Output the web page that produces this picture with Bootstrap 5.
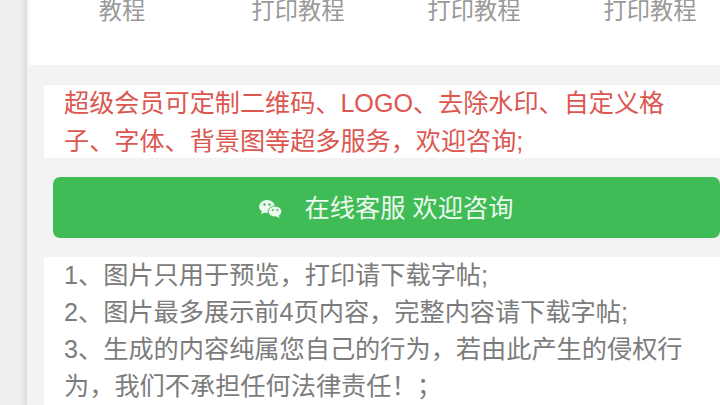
<!DOCTYPE html>
<html lang="zh">
<head>
<meta charset="utf-8">
<title>打印教程</title>
<link href="https://cdn.jsdelivr.net/npm/bootstrap@5.3.0/dist/css/bootstrap.min.css" rel="stylesheet">
<style>
html,body{height:405px;overflow:hidden}
body{background:#f3f3f4;font-family:"Liberation Sans","Noto Sans CJK SC",sans-serif}
.side-rail{width:27px;flex:none;background:linear-gradient(90deg,#efeef1 0,#efeef1 20px,#dedde1 26px,#e4e3e6 27px)}
.page-main{flex:none;width:693px;overflow:hidden}
.guide-strip{height:65px;width:693px;background:linear-gradient(90deg,#f3f3f4 0,#fff 4px);padding-left:7px}
.guide-item{flex:none;width:176px;text-align:center;font-size:23.3px;line-height:22px;color:#999}
.notice-box{margin:20px 0 0 17px;padding:0 20px;height:73px;background:#fff;color:#dc5750;font-size:25.13px;line-height:37.5px}
.chat-btn{margin:19px 0 0 26px;padding:3px 0 0;height:61px;width:667px;border:0;border-radius:7px;background:#40bc56;color:#edf8ef;font-size:25.25px}
.chat-btn:hover{background:#40bc56;color:#edf8ef}
.chat-ico{width:23px;height:18px;margin-right:22px}
.rules-box{margin:19px 0 0 17px;padding:0 20px;height:160px;background:#fff;color:#7c7c7c;font-size:25.2px;line-height:37px}
.rules-box p{margin:0}
</style>
</head>
<body class="d-flex">
<div class="side-rail"></div>
<main class="page-main">
  <div class="guide-strip d-flex">
    <div class="guide-item">教程</div>
    <div class="guide-item">打印教程</div>
    <div class="guide-item">打印教程</div>
    <div class="guide-item">打印教程</div>
  </div>
  <div class="notice-box">超级会员可定制二维码、LOGO、去除水印、自定义格子、字体、背景图等超多服务，欢迎咨询;</div>
  <button type="button" class="btn chat-btn d-flex align-items-center justify-content-center">
    <svg class="chat-ico" viewBox="0 0 23 18" aria-hidden="true">
      <ellipse cx="8" cy="6.500" rx="8" ry="6.500" fill="#edf8ef"/>
      <path d="M3 10.500l-.8 3.700 4.300-2.200z" fill="#edf8ef"/>
      <ellipse cx="16" cy="11.500" rx="6.800" ry="5.500" fill="#edf8ef" stroke="#40bc56" stroke-width="1"/>
      <path d="M19.500 15l1.300 3-3.800-1.500z" fill="#edf8ef"/>
      <circle cx="5.500" cy="4.500" r="1.200" fill="#40bc56"/>
      <circle cx="10.500" cy="4.500" r="1.200" fill="#40bc56"/>
      <circle cx="13.700" cy="10" r="1" fill="#40bc56"/>
      <circle cx="18.300" cy="10" r="1" fill="#40bc56"/>
    </svg>
    <span>在线客服 欢迎咨询</span>
  </button>
  <div class="rules-box">
    <p>1、图片只用于预览，打印请下载字帖;</p>
    <p>2、图片最多展示前4页内容，完整内容请下载字帖;</p>
    <p>3、生成的内容纯属您自己的行为，若由此产生的侵权行为，我们不承担任何法律责任！；</p>
  </div>
</main>
</body>
</html>
